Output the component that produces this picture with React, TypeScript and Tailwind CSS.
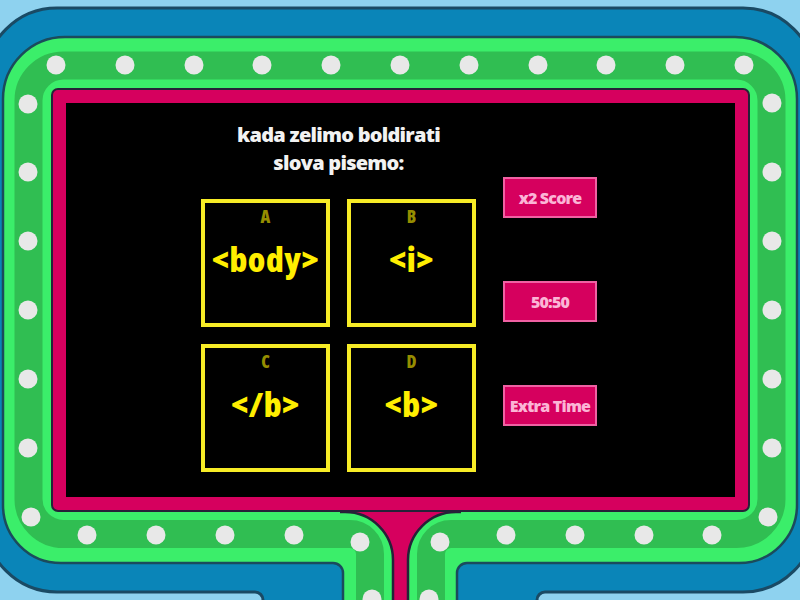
import * as React from 'react';

const DOTS: [number, number][] = [
  // top row
  [56, 65], [125, 65], [194, 65], [262, 65], [331, 65], [400, 65], [469, 65], [538, 65], [606, 65], [675, 65], [744, 65],
  // left column
  [28, 104], [28, 172], [28, 241], [28, 310], [28, 379], [28, 448], [31, 517],
  // right column
  [772, 103], [772, 172], [772, 241], [772, 310], [772, 379], [772, 448], [768, 517],
  // bottom row
  [87, 535], [156, 535], [225, 535], [294, 535], [360, 542],
  [440, 542], [506, 535], [575, 535], [644, 535], [712, 535],
  // stem sides
  [372, 599], [429, 599],
];

const ANSWERS = [
  { key: 'A', label: '<body>' },
  { key: 'B', label: '<i>' },
  { key: 'C', label: '</b>' },
  { key: 'D', label: '<b>' },
];

const POWERUPS = ['x2 Score', '50:50', 'Extra Time'];

const Frame = () => (
  <svg className="absolute inset-0" width="800" height="600" viewBox="0 0 800 600">
    {/* outer blue band */}
    <path
      d="M 57,8 H 743 A 72 72 0 0 1 815,80 V 520 A 72 72 0 0 1 743,592 H 545 A 8 8 0 0 0 537,600 V 610 H 263 V 600 A 8 8 0 0 0 255,592 H 57 A 72 72 0 0 1 -15,520 V 80 A 72 72 0 0 1 57,8 Z"
      fill="#0a85b8"
      stroke="#1a4a64"
      strokeWidth="3"
    />
    {/* green tube */}
    <path
      d="M 65,37 H 735 A 62 62 0 0 1 797,99 V 505 A 58 58 0 0 1 739,563 H 467 A 10 10 0 0 0 457,573 V 610 H 343 V 573 A 10 10 0 0 0 333,563 H 61 A 58 58 0 0 1 3,505 V 99 A 62 62 0 0 1 65,37 Z"
      fill="#3bee6a"
      stroke="#1b4b5c"
      strokeWidth="2.5"
    />
    <path
      d="M 370,610 V 554 A 20 20 0 0 0 350,534 H 63.5 A 35 35 0 0 1 28.5,499 V 100.5 A 35 35 0 0 1 63.5,65.5 H 736.5 A 35 35 0 0 1 771.5,100.5 V 499 A 35 35 0 0 1 736.5,534 H 451 A 20 20 0 0 0 431,554 V 610"
      fill="none"
      stroke="#30be52"
      strokeWidth="28"
    />
    {/* pink stem */}
    <path
      d="M 330,500 H 345 V 512 A 48 48 0 0 1 393,560 V 610 H 408 V 560 A 48 48 0 0 1 456,512 V 500 Z"
      fill="#d6005e"
    />
    <path
      d="M 340,512 H 345 A 48 48 0 0 1 393,560 V 610 M 408,610 V 560 A 48 48 0 0 1 456,512 H 461"
      fill="none"
      stroke="#262238"
      strokeWidth="2.5"
    />
    {DOTS.map(([cx, cy], i) => (
      <circle key={i} cx={cx} cy={cy} r="9.5" fill="#e8e8e8" />
    ))}
  </svg>
);

export default function App() {
  return (
    <div className="relative w-[800px] h-[600px] overflow-hidden bg-[#8ed2ef]">
      <Frame />
      <div className="relative pt-[88px] pl-[51px]">
        <div className="w-[699px] rounded-[7px] border-2 border-[#262238] bg-[#d6005e] p-[13px]">
          <div className="flex h-[394px] w-[669px] items-start bg-black font-['Open_Sans','Roboto',sans-serif] font-extrabold">
            {/* question + answers */}
            <div className="ml-[135px] flex w-[275px] flex-col items-center pt-[18px]">
              <p className="text-center text-[20px] leading-[28px] tracking-[-0.75px] text-[#f2f2f2]">
                kada zelimo boldirati
                <br />
                slova pisemo:
              </p>
              <div className="mt-[22px] grid grid-cols-[129px_129px] gap-[17px] font-stretch-semi-condensed">
                {ANSWERS.map(a => (
                  <div key={a.key} className="flex h-[128px] flex-col items-center border-4 border-[#f7ec26] pt-[5px]">
                    <span className="text-[17px] leading-[17px] text-[#958d00]">{a.key}</span>
                    <span className="mt-[14px] text-[34px] leading-[40px] tracking-[0.5px] text-[#ffee00]">{a.label}</span>
                  </div>
                ))}
              </div>
            </div>

            {/* power-ups */}
            <div className="ml-[27px] flex flex-col gap-[63px] pt-[74px]">
              {POWERUPS.map(p => (
                <div
                  key={p}
                  className="flex h-[41px] w-[94px] items-center justify-center border-2 border-[#f061a3] bg-[#d6005e] text-[16px] tracking-[-0.8px] text-[#fbb5d6]"
                >
                  {p}
                </div>
              ))}
            </div>
          </div>
        </div>
      </div>
    </div>
  );
}
